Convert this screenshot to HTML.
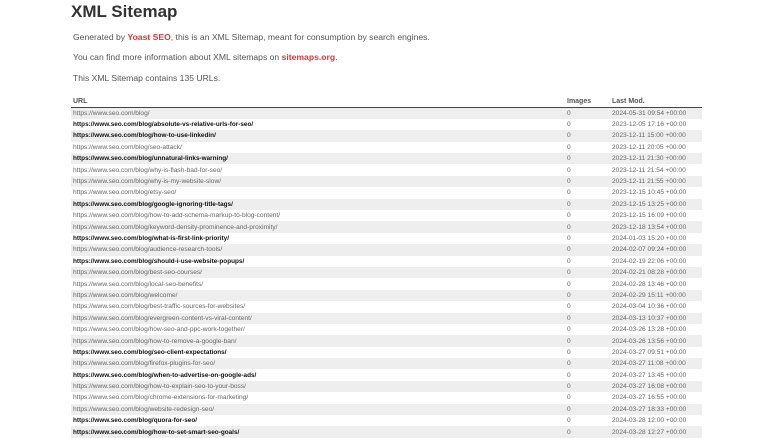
<!DOCTYPE html>
<html><head><style>
body{margin:0;background:#fff;font-family:"Liberation Sans",Arial,sans-serif;color:#444;width:768px;height:437px;overflow:hidden}
h1{position:absolute;left:71px;top:2px;margin:0;font-size:17px;font-weight:bold;color:#333}
p{position:absolute;left:73px;margin:0;font-size:8.6px;color:#555}
p a{color:#e03434;font-weight:bold;text-decoration:none}
table{position:absolute;left:71px;top:95.5px;width:631px;border-collapse:collapse;font-size:6.6px}
th{text-align:left;font-weight:bold;color:#555;height:11px;padding:0 2px;border-bottom:1px solid #444;font-size:7px}
td{height:11.4px;padding:0 2px;color:#666;line-height:11px}
tr.o td{background:#eee}
td.v{color:#111;font-weight:bold;font-size:6.4px}
</style></head><body>
<h1>XML Sitemap</h1>
<p style="top:32px">Generated by <a>Yoast SEO</a>, this is an XML Sitemap, meant for consumption by search engines.</p>
<p style="top:52px">You can find more information about XML sitemaps on <a>sitemaps.org</a>.</p>
<p style="top:73px">This XML Sitemap contains 135 URLs.</p>
<table>
<tr><th style="width:490px">URL</th><th style="width:41px">Images</th><th>Last Mod.</th></tr>
<tr class="o"><td>https://www.seo.com/blog/</td><td>0</td><td>2024-05-31 09:54 +00:00</td></tr>
<tr><td class="v">https://www.seo.com/blog/absolute-vs-relative-urls-for-seo/</td><td>0</td><td>2023-12-05 17:16 +00:00</td></tr>
<tr class="o"><td class="v">https://www.seo.com/blog/how-to-use-linkedin/</td><td>0</td><td>2023-12-11 15:00 +00:00</td></tr>
<tr><td>https://www.seo.com/blog/seo-attack/</td><td>0</td><td>2023-12-11 20:05 +00:00</td></tr>
<tr class="o"><td class="v">https://www.seo.com/blog/unnatural-links-warning/</td><td>0</td><td>2023-12-11 21:30 +00:00</td></tr>
<tr><td>https://www.seo.com/blog/why-is-flash-bad-for-seo/</td><td>0</td><td>2023-12-11 21:54 +00:00</td></tr>
<tr class="o"><td>https://www.seo.com/blog/why-is-my-website-slow/</td><td>0</td><td>2023-12-11 21:55 +00:00</td></tr>
<tr><td>https://www.seo.com/blog/etsy-seo/</td><td>0</td><td>2023-12-15 10:45 +00:00</td></tr>
<tr class="o"><td class="v">https://www.seo.com/blog/google-ignoring-title-tags/</td><td>0</td><td>2023-12-15 13:25 +00:00</td></tr>
<tr><td>https://www.seo.com/blog/how-to-add-schema-markup-to-blog-content/</td><td>0</td><td>2023-12-15 16:09 +00:00</td></tr>
<tr class="o"><td>https://www.seo.com/blog/keyword-density-prominence-and-proximity/</td><td>0</td><td>2023-12-18 13:54 +00:00</td></tr>
<tr><td class="v">https://www.seo.com/blog/what-is-first-link-priority/</td><td>0</td><td>2024-01-03 15:20 +00:00</td></tr>
<tr class="o"><td>https://www.seo.com/blog/audience-research-tools/</td><td>0</td><td>2024-02-07 09:24 +00:00</td></tr>
<tr><td class="v">https://www.seo.com/blog/should-i-use-website-popups/</td><td>0</td><td>2024-02-19 22:06 +00:00</td></tr>
<tr class="o"><td>https://www.seo.com/blog/best-seo-courses/</td><td>0</td><td>2024-02-21 08:28 +00:00</td></tr>
<tr><td>https://www.seo.com/blog/local-seo-benefits/</td><td>0</td><td>2024-02-28 13:46 +00:00</td></tr>
<tr class="o"><td>https://www.seo.com/blog/welcome/</td><td>0</td><td>2024-02-29 15:11 +00:00</td></tr>
<tr><td>https://www.seo.com/blog/best-traffic-sources-for-websites/</td><td>0</td><td>2024-03-04 10:36 +00:00</td></tr>
<tr class="o"><td>https://www.seo.com/blog/evergreen-content-vs-viral-content/</td><td>0</td><td>2024-03-13 10:37 +00:00</td></tr>
<tr><td>https://www.seo.com/blog/how-seo-and-ppc-work-together/</td><td>0</td><td>2024-03-26 13:28 +00:00</td></tr>
<tr class="o"><td>https://www.seo.com/blog/how-to-remove-a-google-ban/</td><td>0</td><td>2024-03-26 13:56 +00:00</td></tr>
<tr><td class="v">https://www.seo.com/blog/seo-client-expectations/</td><td>0</td><td>2024-03-27 09:51 +00:00</td></tr>
<tr class="o"><td>https://www.seo.com/blog/firefox-plugins-for-seo/</td><td>0</td><td>2024-03-27 11:08 +00:00</td></tr>
<tr><td class="v">https://www.seo.com/blog/when-to-advertise-on-google-ads/</td><td>0</td><td>2024-03-27 13:45 +00:00</td></tr>
<tr class="o"><td>https://www.seo.com/blog/how-to-explain-seo-to-your-boss/</td><td>0</td><td>2024-03-27 16:08 +00:00</td></tr>
<tr><td>https://www.seo.com/blog/chrome-extensions-for-marketing/</td><td>0</td><td>2024-03-27 16:55 +00:00</td></tr>
<tr class="o"><td>https://www.seo.com/blog/website-redesign-seo/</td><td>0</td><td>2024-03-27 18:33 +00:00</td></tr>
<tr><td class="v">https://www.seo.com/blog/quora-for-seo/</td><td>0</td><td>2024-03-28 12:00 +00:00</td></tr>
<tr class="o"><td class="v">https://www.seo.com/blog/how-to-set-smart-seo-goals/</td><td>0</td><td>2024-03-28 12:27 +00:00</td></tr>
</table>
</body></html>
